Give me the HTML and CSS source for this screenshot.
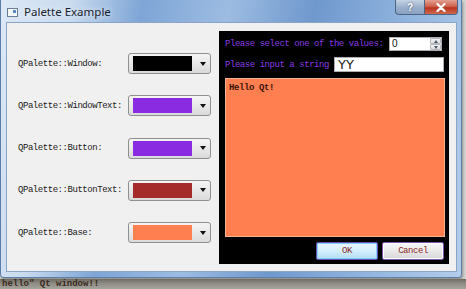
FILE: index.html
```html
<!DOCTYPE html>
<html lang="en">
<head>
    <meta charset="UTF-8">
    <title>Palette Example</title>
    <link rel="stylesheet" href="styles.css">
</head>
<body>
  <div class="desk">
    <div class="window">
      <!-- Title bar -->
      <div class="titlebar">
        <span class="app-icon"><span></span></span>
        <span class="title">Palette Example</span>
        <div class="caption">
          <span class="cap help">?</span>
          <span class="cap close">
            <svg width="10" height="9" viewBox="0 0 10 9"><path d="M1.5 1 L8.5 8 M8.5 1 L1.5 8" stroke="#fff" stroke-width="2.2" stroke-linecap="round"/></svg>
          </span>
        </div>
      </div>

      <!-- Client area -->
      <div class="client">
        <div class="roles">
          <label>QPalette::Window:</label>
          <div class="combo"><span class="swatch black"></span><span class="arrow"></span></div>
          <label>QPalette::WindowText:</label>
          <div class="combo"><span class="swatch violet"></span><span class="arrow"></span></div>
          <label>QPalette::Button:</label>
          <div class="combo"><span class="swatch violet"></span><span class="arrow"></span></div>
          <label>QPalette::ButtonText:</label>
          <div class="combo"><span class="swatch brown"></span><span class="arrow"></span></div>
          <label>QPalette::Base:</label>
          <div class="combo"><span class="swatch coral"></span><span class="arrow"></span></div>
        </div>

        <div class="preview">
          <div class="row">
            <span>Please select one of the values:</span>
            <div class="spin">
              <span class="value">0</span>
              <span class="steps">
                <span class="step"><i class="up"></i></span>
                <span class="step"><i class="down"></i></span>
              </span>
            </div>
          </div>
          <div class="row">
            <span>Please input a string</span>
            <div class="line-edit">YY</div>
          </div>
          <div class="text-edit">Hello Qt!</div>
          <div class="buttons">
            <button class="btn ok">OK</button>
            <button class="btn">Cancel</button>
          </div>
        </div>
      </div>
    </div>
    <div class="console"><span>hello" Qt window!!</span></div>
  </div>
</body>
</html>
```

FILE: styles.css
```css
* {
    margin: 0;
    padding: 0;
    box-sizing: border-box;
}

body {
    width: 466px;
    height: 289px;
    overflow: hidden;
    background: #d6d6d4;
    font-family: "Liberation Mono", monospace;
}

.desk {
    width: 466px;
    height: 289px;
}

/* Fenster */
.window {
    width: 462px;
    height: 278px;
    padding: 0 4px 5px 5px;
    background: linear-gradient(100deg, #dce8f5 0%, #c9dbef 14%, #7ea5d6 28%, #9dbce2 45%, #6f98cd 62%, #8fb3de 80%, #b3cdea 100%);
    border: 1px solid #5a7ea8;
    border-top: none;
    border-radius: 0 0 4px 4px;
    box-shadow: 1px 2px 3px rgba(0,0,0,0.35);
}

.titlebar {
    height: 22px;
    display: flex;
    align-items: flex-start;
}

.app-icon {
    width: 11px;
    height: 9px;
    margin: 8px 0 0 1px;
    border: 1px solid #6b7d92;
    background: #f4f7fa;
    display: flex;
    justify-content: flex-end;
}

.app-icon span {
    width: 3px;
    height: 3px;
    margin: 1px;
    background: #5a88c0;
}

.title {
    margin: 4px 0 0 6px;
    font-family: "Noto Sans", sans-serif;
    font-size: 11.5px;
    color: #1c2430;
    text-shadow: 0 0 6px rgba(255,255,255,0.9);
}

.caption {
    margin-left: auto;
    margin-right: -1px;
    display: flex;
}

.cap {
    height: 15px;
    display: flex;
    justify-content: center;
    align-items: center;
    border: 1px solid #4d6584;
    border-top: none;
    font-family: "Liberation Sans", sans-serif;
    font-weight: bold;
    font-size: 10px;
    color: #fff;
}

.help {
    width: 29px;
    border-radius: 0 0 0 4px;
    border-right: none;
    background: linear-gradient(#c5d3e4, #98aeca 55%, #8aa2c2);
    text-shadow: 0 0 2px #3b4f6a;
}

.close {
    width: 34px;
    border-radius: 0 0 4px 0;
    background: linear-gradient(#e3a193, #cc5a45 50%, #b8321e 55%, #d06a50);
}

.client {
    height: 250px;
    display: flex;
    padding-top: 8px;
    background: #f0f0f0;
    border: 1px solid #8ba5c6;
}

/* linke Spalte */
.roles {
    width: 212px;
    margin-top: 22px;
    padding-left: 11px;
    display: grid;
    grid-template-columns: 110px 83px;
    grid-auto-rows: 21px;
    row-gap: 21.25px;
    align-content: start;
    align-items: center;
}

.roles label {
    font-size: 9px;
    letter-spacing: -0.45px;
    color: #1a1a1a;
}

.combo {
    height: 21px;
    display: flex;
    align-items: center;
    padding-left: 4px;
    border: 1px solid #8e8f8f;
    border-radius: 3px;
    background: linear-gradient(#f5f5f5, #e8e8e8 50%, #dadada);
}

.swatch {
    width: 59px;
    height: 15px;
}

.swatch.black { background: #000; }
.swatch.violet { background: #8a2be2; }
.swatch.brown { background: #a52a2a; }
.swatch.coral { background: #ff7f50; }

.arrow {
    margin-left: 8px;
    width: 0;
    height: 0;
    border-left: 3.5px solid transparent;
    border-right: 3.5px solid transparent;
    border-top: 4px solid #111;
}

/* Vorschau */
.preview {
    width: 230px;
    height: 233px;
    display: flex;
    flex-direction: column;
    gap: 6px;
    padding: 6px 4px 4px 6px;
    background: #000;
}

.row {
    display: flex;
    justify-content: space-between;
    align-items: center;
    font-size: 9px;
    letter-spacing: -0.45px;
    color: #8a3ae0;
}

.row:first-child {
    height: 14px;
}

.row:nth-child(2) {
    height: 15px;
}

.spin {
    width: 53px;
    height: 14px;
    margin-right: 3px;
    display: flex;
    background: #fff;
    border: 1px solid #abadb3;
}

.spin .value {
    flex: 1;
    padding-left: 2px;
    font-family: "Liberation Sans", sans-serif;
    font-size: 10px;
    line-height: 12px;
    color: #111;
    letter-spacing: 0;
}

.steps {
    width: 11px;
    display: flex;
    flex-direction: column;
}

.step {
    flex: 1;
    display: flex;
    justify-content: center;
    align-items: center;
    background: linear-gradient(#f4f4f4, #dedede);
    border: 1px solid #b4b8bd;
    border-radius: 1px;
}

.step i {
    width: 0;
    height: 0;
    border-left: 2.5px solid transparent;
    border-right: 2.5px solid transparent;
}

.step .up { border-bottom: 3px solid #4a5a6a; }
.step .down { border-top: 3px solid #4a5a6a; }

.line-edit {
    width: 110px;
    height: 15px;
    margin-right: 1px;
    padding-left: 3px;
    background: #fff;
    border: 1px solid #abadb3;
    font-family: "DejaVu Sans", sans-serif;
    font-size: 13px;
    line-height: 13px;
    letter-spacing: 0;
    color: #222;
}

.text-edit {
    flex: 1;
    padding: 4px 3px;
    background: #ff7f50;
    border: 1px solid #f4b293;
    font-size: 9px;
    font-weight: bold;
    letter-spacing: -0.4px;
    color: #3a1608;
}

.buttons {
    height: 18px;
    margin-top: -1px;
    display: flex;
    justify-content: flex-end;
    gap: 4px;
    padding-right: 1px;
}

.btn {
    width: 62px;
    height: 18px;
    font-family: "Liberation Mono", monospace;
    font-size: 9px;
    letter-spacing: -0.45px;
    color: #8b2a2a;
    border: 1px solid #7d55b0;
    border-radius: 2px;
    box-shadow: inset 0 0 0 1px #fff;
    background: linear-gradient(#f6f6f6, #e9e9e9 50%, #d7d7d7);
}

.btn.ok {
    border-color: #6a4fb8;
    box-shadow: inset 0 0 0 1px #7ed0f6;
    background: linear-gradient(#eaf6fd, #d4eefc 50%, #b2def5);
}

/* Konsole hinter dem Fenster */
.console {
    height: 11px;
    margin-top: 1px;
    overflow: hidden;
    background: linear-gradient(#6f6a60, #8d8b84 40%, #a9a9a2);
}

.console span {
    display: block;
    margin-left: 2px;
    font-size: 9px;
    line-height: 11px;
    font-weight: bold;
    color: #3a2a20;
    white-space: pre;
}
```
